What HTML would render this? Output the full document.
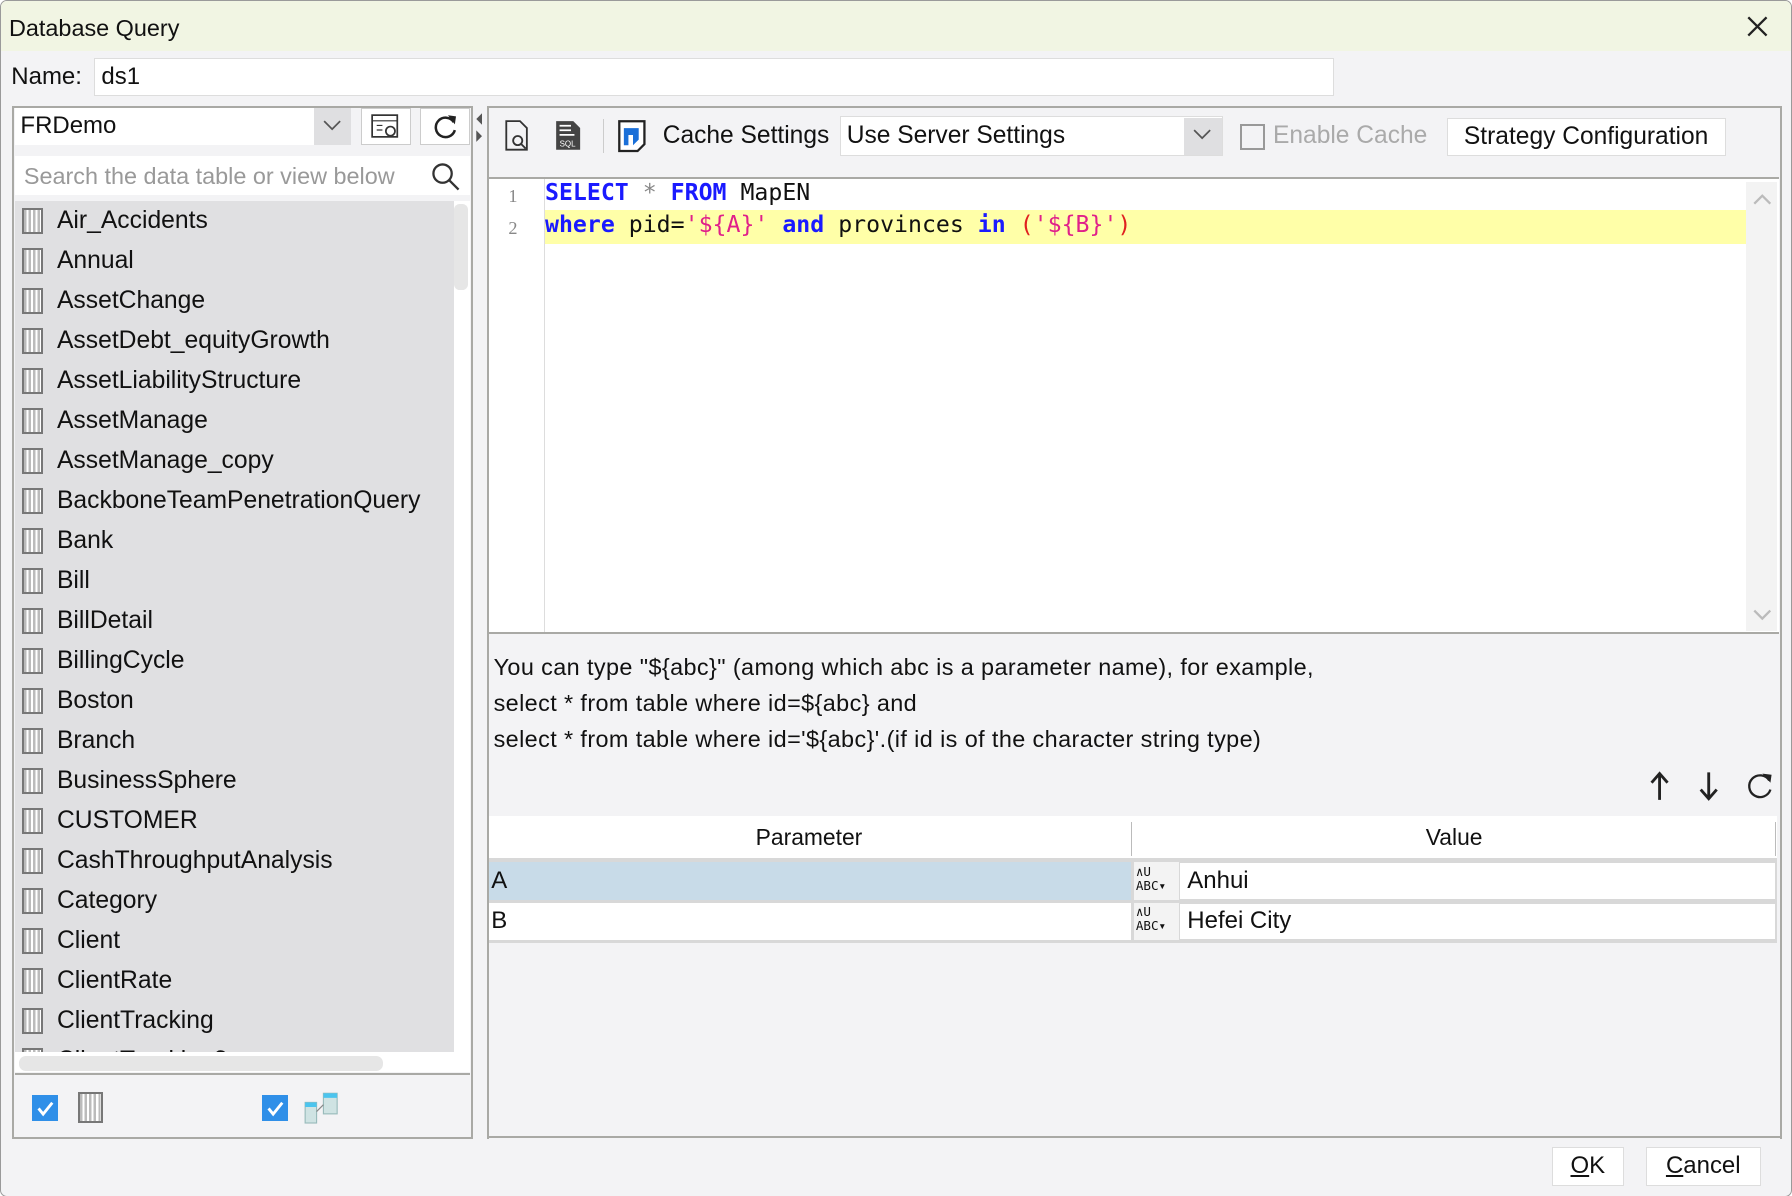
<!DOCTYPE html>
<html><head><meta charset="utf-8"><style>
html,body{margin:0;padding:0;width:1792px;height:1196px;overflow:hidden;background:#fff}
#w{zoom:1.142857;position:relative;width:1568px;height:1047px;background:#f3f3f5;font-family:"Liberation Sans",sans-serif;color:#111;font-size:21px;border:1px solid #9a9a9a;box-sizing:border-box;border-radius:6px;overflow:hidden}
.a{position:absolute}
.row{position:absolute;left:2px;height:35px;line-height:35px;white-space:nowrap;font-size:21.6px}
.ti{position:absolute;left:4px;top:6px;width:19px;height:23px;border:2px solid #777;box-sizing:border-box;background:repeating-linear-gradient(90deg,#bbb 0 2px,#fff 2px 4px)}
.row span{position:absolute;left:35px}
.code{font-family:"DejaVu Sans Mono","Liberation Mono",monospace;font-size:20.3px;white-space:pre}
.kw{color:#1a1aff;font-weight:bold}.str{color:#e0208a}
</style></head><body><div id="w">
<div class="a" style="left:0;top:0;width:1568px;height:44px;background:#f1f5e3"></div>
<div class="a" style="left:7px;top:12px;font-size:20.5px">Database Query</div>
<svg class="a" style="left:1527px;top:12px" width="20" height="20"><path d="M2 2L18 18M18 2L2 18" stroke="#222" stroke-width="2"/></svg>
<div class="a" style="left:9px;top:54px">Name:</div>
<div class="a" style="left:81px;top:50px;width:1085px;height:33px;background:#fff;border:1px solid #ddd;box-sizing:border-box;padding-left:6px;line-height:31px">ds1</div>

<div class="a" style="left:10px;top:92px;width:403px;height:904px;border:2px solid #a9a9a5;box-sizing:border-box"></div>
<div class="a" style="left:12px;top:94px;width:294px;height:32px;background:#fff"></div>
<div class="a" style="left:17px;top:97px">FRDemo</div>
<div class="a" style="left:274px;top:94px;width:32px;height:32px;background:#dfdfe1"></div>
<svg class="a" style="left:282px;top:104px" width="16" height="10"><path d="M1 1L8 8L15 1" stroke="#555" fill="none" stroke-width="1.5"/></svg>
<div class="a" style="left:315px;top:94px;width:44px;height:32px;background:#fff;border:1px solid #ccc;box-sizing:border-box"></div>
<svg class="a" style="left:324px;top:99px" width="26" height="22"><rect x="1" y="1" width="22" height="19" fill="none" stroke="#333" stroke-width="1.5"/><path d="M1 6H23M5 10H10M5 14H10" stroke="#333"/><circle cx="17" cy="15" r="4" fill="none" stroke="#333" stroke-width="1.5"/></svg>
<div class="a" style="left:367px;top:94px;width:43px;height:32px;background:#fff;border:1px solid #ccc;box-sizing:border-box"></div>
<svg class="a" style="left:377px;top:98px" width="24" height="24"><path d="M19 8A8.5 8.5 0 1 0 20 15" fill="none" stroke="#222" stroke-width="2.2"/><path d="M14 2L21 3L20 10Z" fill="#222"/></svg>
<div class="a" style="left:12px;top:136px;width:398px;height:34px;background:#fff"></div>
<div class="a" style="left:20px;top:142px;color:#999;font-size:20.5px">Search the data table or view below</div>
<svg class="a" style="left:375px;top:140px" width="28" height="28"><circle cx="11" cy="11" r="8" fill="none" stroke="#333" stroke-width="2"/><path d="M17 17L25 25" stroke="#333" stroke-width="2"/></svg>
<div class="a" style="left:12px;top:175px;width:384px;height:745px;background:#e0e0e2;overflow:hidden">
<div class="row" style="top:0"><i class="ti"></i><span>Air_Accidents</span></div>
<div class="row" style="top:35px"><i class="ti"></i><span>Annual</span></div>
<div class="row" style="top:70px"><i class="ti"></i><span>AssetChange</span></div>
<div class="row" style="top:105px"><i class="ti"></i><span>AssetDebt_equityGrowth</span></div>
<div class="row" style="top:140px"><i class="ti"></i><span>AssetLiabilityStructure</span></div>
<div class="row" style="top:175px"><i class="ti"></i><span>AssetManage</span></div>
<div class="row" style="top:210px"><i class="ti"></i><span>AssetManage_copy</span></div>
<div class="row" style="top:245px"><i class="ti"></i><span>BackboneTeamPenetrationQuery</span></div>
<div class="row" style="top:280px"><i class="ti"></i><span>Bank</span></div>
<div class="row" style="top:315px"><i class="ti"></i><span>Bill</span></div>
<div class="row" style="top:350px"><i class="ti"></i><span>BillDetail</span></div>
<div class="row" style="top:385px"><i class="ti"></i><span>BillingCycle</span></div>
<div class="row" style="top:420px"><i class="ti"></i><span>Boston</span></div>
<div class="row" style="top:455px"><i class="ti"></i><span>Branch</span></div>
<div class="row" style="top:490px"><i class="ti"></i><span>BusinessSphere</span></div>
<div class="row" style="top:525px"><i class="ti"></i><span>CUSTOMER</span></div>
<div class="row" style="top:560px"><i class="ti"></i><span>CashThroughputAnalysis</span></div>
<div class="row" style="top:595px"><i class="ti"></i><span>Category</span></div>
<div class="row" style="top:630px"><i class="ti"></i><span>Client</span></div>
<div class="row" style="top:665px"><i class="ti"></i><span>ClientRate</span></div>
<div class="row" style="top:700px"><i class="ti"></i><span>ClientTracking</span></div>
<div class="row" style="top:735px"><i class="ti"></i><span>ClientTracking2</span></div>
</div>
<div class="a" style="left:396px;top:175px;width:14px;height:747px;background:#fff"></div>
<div class="a" style="left:396px;top:178px;width:13px;height:75px;background:#e6e6e6;border-radius:5px"></div>
<div class="a" style="left:12px;top:920px;width:398px;height:17px;background:#fff"></div>
<div class="a" style="left:16px;top:923px;width:318px;height:13px;background:#e6e6e6;border-radius:6px"></div>
<div class="a" style="left:12px;top:938px;width:398px;height:2px;background:#a9a9a5"></div>
<div class="a" style="left:27px;top:957px;width:23px;height:23px;background:#2f8fe8"></div>
<svg class="a" style="left:29px;top:959px" width="20" height="20"><path d="M4 10L8 15L16 5" stroke="#fff" stroke-width="2.5" fill="none"/></svg>
<i class="ti a" style="left:67px;top:955px;width:22px;height:27px"></i>
<div class="a" style="left:228px;top:957px;width:23px;height:23px;background:#2f8fe8"></div>
<svg class="a" style="left:230px;top:959px" width="20" height="20"><path d="M4 10L8 15L16 5" stroke="#fff" stroke-width="2.5" fill="none"/></svg>
<svg class="a" style="left:265px;top:954px" width="30" height="30"><rect x="1" y="10" width="10" height="18" fill="#cfe3e3" stroke="#9bb"/><rect x="1" y="10" width="10" height="4" fill="#4bc4ee"/><rect x="17" y="2" width="12" height="18" fill="#cfe3e3" stroke="#9bb"/><rect x="17" y="2" width="12" height="4" fill="#4bc4ee"/><path d="M11 18L17 12" stroke="#888"/></svg>
<svg class="a" style="left:414px;top:96px" width="9" height="30"><path d="M7 2L2 7L7 12Z M2 17L7 22L2 27Z" fill="#555"/></svg>

<div class="a" style="left:425px;top:92px;width:1133px;height:904px;border:2px solid #a9a9a5;border-bottom:none;box-sizing:border-box"></div>
<svg class="a" style="left:440px;top:104px" width="24" height="28"><path d="M2 1H14L20 7V26H2Z" fill="none" stroke="#333" stroke-width="1.6"/><circle cx="12" cy="18" r="4" fill="none" stroke="#333" stroke-width="1.6"/><path d="M15 21L19 25" stroke="#333" stroke-width="1.6"/></svg>
<svg class="a" style="left:485px;top:104px" width="24" height="28"><path d="M1 1H16L22 7V26H1Z" fill="#444"/><path d="M4 5H14M4 9H14M4 13H17" stroke="#fff" stroke-width="1.5"/><text x="4" y="23" font-size="7" fill="#fff" font-family="Liberation Sans">SQL</text></svg>
<div class="a" style="left:527px;top:103px;width:1px;height:30px;background:#ccc"></div>
<svg class="a" style="left:539px;top:103px" width="28" height="30"><path d="M2 2H24V22L18 28H2Z" fill="#fff" stroke="#222" stroke-width="2"/><path d="M6 8H19V18L14 23V14H10V23H6Z" fill="#1a6fd8"/></svg>
<div class="a" style="left:579px;top:106px;font-size:21.5px">Cache Settings</div>
<div class="a" style="left:734px;top:101px;width:335px;height:35px;background:#fff;border:1px solid #ddd;box-sizing:border-box"></div>
<div class="a" style="left:740px;top:106px;font-size:21.5px">Use Server Settings</div>
<div class="a" style="left:1035px;top:102px;width:33px;height:33px;background:#dfdfe1"></div>
<svg class="a" style="left:1043px;top:112px" width="16" height="10"><path d="M1 1L8 8L15 1" stroke="#555" fill="none" stroke-width="1.5"/></svg>
<div class="a" style="left:1084px;top:108px;width:22px;height:22px;border:2px solid #999;box-sizing:border-box"></div>
<div class="a" style="left:1113px;top:106px;color:#aaa;font-size:21.5px">Enable Cache</div>
<div class="a" style="left:1265px;top:102px;width:244px;height:34px;background:#fff;border:1px solid #ddd;box-sizing:border-box;text-align:center;line-height:32px;font-size:21.5px">Strategy Configuration</div>
<div class="a" style="left:427px;top:154px;width:1129px;height:2px;background:#a9a9a5"></div>
<div class="a" style="left:427px;top:156px;width:1129px;height:396px;background:#fff"></div>
<div class="a" style="left:475px;top:156px;width:1px;height:396px;background:#ddd"></div>
<div class="a" style="left:476px;top:183px;width:1051px;height:30px;background:#ffffa8"></div>
<div class="a code" style="left:444px;top:157px;color:#888;font-size:16px;line-height:28px;font-family:'Liberation Serif',serif">1<br>2</div>
<div class="a code" style="left:476px;top:154px;line-height:28px"><span class="kw">SELECT</span> <span style="color:#888">*</span> <span class="kw">FROM</span> MapEN
<span class="kw">where</span> pid=<span class="str">'${A}'</span> <span class="kw">and</span> provinces <span class="kw">in</span> <span style="color:#e02020">(</span><span class="str">'${B}'</span><span style="color:#e02020">)</span></div>
<div class="a" style="left:1527px;top:158px;width:27px;height:393px;background:#f3f3f3"></div>
<svg class="a" style="left:1532px;top:165px" width="18" height="385"><path d="M2 12L9 5L16 12" stroke="#bbb" fill="none" stroke-width="2"/><path d="M2 368L9 375L16 368" stroke="#bbb" fill="none" stroke-width="2"/></svg>
<div class="a" style="left:427px;top:552px;width:1129px;height:2px;background:#a9a9a5"></div>
<div class="a" style="left:431px;top:567px;font-size:20.5px;line-height:31.5px;letter-spacing:0.35px">You can type "${abc}" (among which abc is a parameter name), for example,<br>select * from table where id=${abc} and<br>select * from table where id='${abc}'.(if id is of the character string type)</div>
<svg class="a" style="left:1440px;top:672px" width="110" height="30"><path d="M11 27V5M4 12L11 4L18 12" stroke="#222" stroke-width="2.5" fill="none"/><path d="M54 3V25M47 18L54 26L61 18" stroke="#222" stroke-width="2.5" fill="none"/><path d="M107 10A9.5 9.5 0 1 0 108 18" stroke="#222" stroke-width="2" fill="none"/><path d="M101 4L109 5L108 12Z" fill="#222"/></svg>
<div class="a" style="left:427px;top:713px;width:1127px;height:37px;background:#fff"></div>
<div class="a" style="left:989px;top:718px;width:1px;height:30px;background:#bbb"></div>
<div class="a" style="left:1552px;top:718px;width:1px;height:30px;background:#bbb"></div>
<div class="a" style="left:427px;top:720px;width:560px;text-align:center;font-size:20px">Parameter</div>
<div class="a" style="left:990px;top:720px;width:563px;text-align:center;font-size:20px">Value</div>
<div class="a" style="left:427px;top:750px;width:1127px;height:74px;background:#d8d8d8"></div>
<div class="a" style="left:427px;top:753px;width:562px;height:34px;background:#c8dbe8"></div>
<div class="a" style="left:427px;top:789px;width:562px;height:33px;background:#fff"></div>
<div class="a" style="left:429px;top:758px">A</div>
<div class="a" style="left:429px;top:793px">B</div>
<div class="a" style="left:991px;top:753px;width:40px;height:34px;background:#f3f3f3"></div>
<div class="a" style="left:991px;top:789px;width:40px;height:33px;background:#f3f3f3"></div>
<div class="a" style="left:993px;top:756px;font-size:11px;line-height:12px;font-family:'DejaVu Sans Mono',monospace">&#x2227;U<br>ABC▾</div>
<div class="a" style="left:993px;top:791px;font-size:11px;line-height:12px;font-family:'DejaVu Sans Mono',monospace">&#x2227;U<br>ABC▾</div>
<div class="a" style="left:1032px;top:754px;width:520px;height:32px;background:#fff"></div>
<div class="a" style="left:1032px;top:790px;width:520px;height:31px;background:#fff"></div>
<div class="a" style="left:1038px;top:758px">Anhui</div>
<div class="a" style="left:1038px;top:793px">Hefei City</div>
<div class="a" style="left:425px;top:993px;width:1133px;height:2px;background:#a9a9a5"></div>
<div class="a" style="left:1357px;top:1003px;width:63px;height:34px;background:#fff;border:1px solid #ddd;box-sizing:border-box;text-align:center;line-height:32px"><u>O</u>K</div>
<div class="a" style="left:1439px;top:1003px;width:101px;height:34px;background:#fff;border:1px solid #ddd;box-sizing:border-box;text-align:center;line-height:32px"><u>C</u>ancel</div>
</div></body></html>
